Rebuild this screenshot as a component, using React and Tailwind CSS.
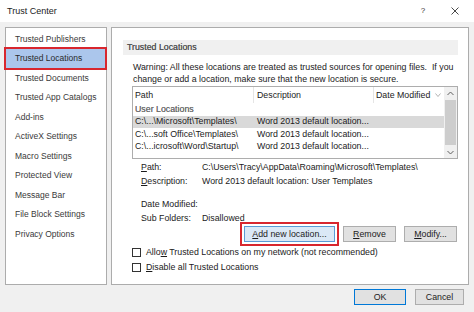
import React from "react";

const navItems = [
  "Trusted Publishers",
  "Trusted Locations",
  "Trusted Documents",
  "Trusted App Catalogs",
  "Add-ins",
  "ActiveX Settings",
  "Macro Settings",
  "Protected View",
  "Message Bar",
  "File Block Settings",
  "Privacy Options",
];

const rows = [
  ["C:\\...\\Microsoft\\Templates\\", "Word 2013 default location...", true],
  ["C:\\...soft Office\\Templates\\", "Word 2013 default location...", false],
  ["C:\\...icrosoft\\Word\\Startup\\", "Word 2013 default location...", false],
];

function Chevron({ up }) {
  return (
    <svg width="7" height="5" viewBox="0 0 7 5">
      <path
        d={up ? "M0.5 4 L3.5 1 L6.5 4" : "M0.5 1 L3.5 4 L6.5 1"}
        fill="none"
        stroke="#606060"
        strokeWidth="1"
      />
    </svg>
  );
}

function Btn({ children, className = "" }) {
  return (
    <div
      className={
        "h-[16px] flex items-center justify-center border bg-[#e1e1e1] border-[#adadad] " +
        className
      }
    >
      {children}
    </div>
  );
}

export default function App() {
  return (
    <div className="w-[474px] h-[312px] bg-[#f0f0f0] flex flex-col text-[8.5px] leading-none text-[#1b1b1b] font-['Liberation_Sans',sans-serif] overflow-hidden">
      {/* title bar */}
      <div className="h-[22px] bg-white flex items-center pl-[7px] pr-[9px]">
        <span className="text-[9px]">Trust Center</span>
        <div className="ml-auto flex items-center gap-[12px]">
          <span className="w-[20px] text-center text-[8px] text-[#333]">?</span>
          <span className="w-[20px] flex justify-center">
            <svg width="8" height="8" viewBox="0 0 8 8">
              <path d="M0.5 0.5 L7.5 7.5 M7.5 0.5 L0.5 7.5" stroke="#333" strokeWidth="0.9" />
            </svg>
          </span>
        </div>
      </div>

      {/* body */}
      <div className="h-[258px] mt-[5px] flex px-[5px] gap-[4px]">
        {/* left nav */}
        <div className="w-[102px] bg-white border border-[#acacac] pt-[1px] flex flex-col">
          {navItems.map((t, i) =>
            i === 1 ? (
              <div
                key={t}
                className="h-[23px] -my-[1.75px] -ml-[2px] -mr-[1px] border-2 border-[#d8262e] bg-[#abc6ec] flex items-center pl-[9px] text-[#2a2a2a] relative"
              >
                {t}
              </div>
            ) : (
              <div key={t} className="h-[19.5px] flex items-center pl-[9px] text-[#3a3a3a]">
                {t}
              </div>
            )
          )}
        </div>

        {/* right content */}
        <div className="w-[358px] bg-white border border-[#acacac] flex flex-col text-[8.8px]">
          <div className="mt-[12px] ml-[11px] mr-[10px] h-[15px] bg-[#f0f0f0] flex items-center pl-[4px] text-[#555555] [text-shadow:0_0_0.3px_#555]">
            Trusted Locations
          </div>

          <div className="ml-[20px] mr-[10px] flex flex-col">
            <div className="mt-[6px] pl-[1px] leading-[12px] whitespace-nowrap">
              Warning: All these locations are treated as trusted sources for opening files.&nbsp; If you
              <br />
              change or add a location, make sure that the new location is secure.
            </div>

            {/* list box */}
            <div className="mt-[1px] h-[73px] border border-[#adadad] flex">
              <div className="flex-1 flex flex-col">
                <div className="h-[16px] flex items-stretch">
                  <div className="w-[121px] border-r border-[#e5e5e5] pl-[2px] flex items-center">Path</div>
                  <div className="w-[120px] border-r border-[#e5e5e5] pl-[3px] flex items-center">Description</div>
                  <div className="flex-1 pl-[2px] flex items-center whitespace-nowrap">
                    Date Modified
                    <span className="ml-[5px]">
                      <svg width="6" height="4" viewBox="0 0 6 4">
                        <path d="M0.5 0.5 L3 3.5 L5.5 0.5" fill="none" stroke="#aaa" strokeWidth="0.9" />
                      </svg>
                    </span>
                  </div>
                </div>
                <div className="h-[12.5px] flex items-center pl-[2px] text-[#6e6e6e] [text-shadow:0_0_0.3px_#6e6e6e]">
                  User Locations
                </div>
                {rows.map(([p, d, sel]) => (
                  <div
                    key={p}
                    className={"h-[12.5px] flex items-center " + (sel ? "bg-[#d9d9d9]" : "")}
                  >
                    <div className="w-[121px] pl-[2px] whitespace-nowrap">{p}</div>
                    <div className="pl-[3px] whitespace-nowrap">{d}</div>
                  </div>
                ))}
              </div>
              {/* scrollbar */}
              <div className="w-[13px] bg-[#f0f0f0] flex flex-col items-center">
                <div className="h-[13px] flex items-center justify-center">
                  <Chevron up />
                </div>
                <div className="w-[11px] h-[45px] bg-[#cdcdcd]" />
                <div className="flex-1" />
                <div className="h-[12px] flex items-center justify-center">
                  <Chevron />
                </div>
              </div>
            </div>

            {/* details */}
            <div className="mt-[1px] pl-[9px] flex flex-col">
              <div className="h-[14px] flex items-center">
                <span className="w-[61px]">
                  <u className="underline-offset-1">P</u>ath:
                </span>
                <span className="whitespace-nowrap">C:\Users\Tracy\AppData\Roaming\Microsoft\Templates\</span>
              </div>
              <div className="h-[14px] flex items-center">
                <span className="w-[61px]">
                  <u className="underline-offset-1">D</u>escription:
                </span>
                <span>Word 2013 default location: User Templates</span>
              </div>
              <div className="h-[14px] mt-[9px] flex items-center">
                <span className="w-[61px] whitespace-nowrap">Date Modified:</span>
              </div>
              <div className="h-[14px] flex items-center">
                <span className="w-[61px]">Sub Folders:</span>
                <span>Disallowed</span>
              </div>
            </div>

            {/* buttons */}
            <div className="mt-[1px] flex justify-end gap-[8px] pr-[1px]">
              <div className="w-[91px] h-[16px] flex items-center justify-center border border-[#5b9bd5] bg-[#dbe8f6] outline-2 outline-[#d8262e] outline-offset-[2px]">
                <span>
                  <u className="underline-offset-1">A</u>dd new location...
                </span>
              </div>
              <Btn className="w-[53px]">
                <span>
                  <u className="underline-offset-1">R</u>emove
                </span>
              </Btn>
              <Btn className="w-[53px]">
                <span>
                  <u className="underline-offset-1">M</u>odify...
                </span>
              </Btn>
            </div>

            {/* checkboxes */}
            <div className="mt-[3px] flex flex-col">
              <div className="h-[14px] flex items-center gap-[5px]">
                <div className="w-[9px] h-[9px] border border-[#333] bg-white" />
                <span>
                  Allo<u className="underline-offset-1">w</u> Trusted Locations on my network (not recommended)
                </span>
              </div>
              <div className="h-[14px] mt-[1px] flex items-center gap-[5px]">
                <div className="w-[9px] h-[9px] border border-[#333] bg-white" />
                <span>
                  <u className="underline-offset-1">D</u>isable all Trusted Locations
                </span>
              </div>
            </div>
          </div>
        </div>
      </div>

      {/* bottom buttons */}
      <div className="mt-[4px] flex justify-end gap-[9px] pr-[10px] text-[8.8px]">
        <div className="w-[52px] h-[16px] flex items-center justify-center border border-[#0078d7] bg-[#e1e1e1]">
          OK
        </div>
        <Btn className="w-[49px]">Cancel</Btn>
      </div>
    </div>
  );
}
